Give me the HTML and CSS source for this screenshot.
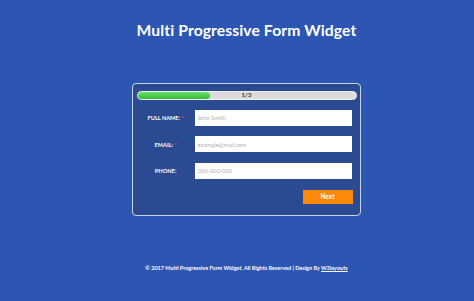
FILE: index.html
```html
<!DOCTYPE html>
<html>
<head>
<meta charset="utf-8">
<link rel="stylesheet" href="styles.css">
</head>
<body>
<div class="page">
  <h1 class="title">Multi Progressive Form Widget</h1>
  <form class="card">
    <div class="progress">
      <div class="progress-fill"></div>
      <span class="progress-text">1/3</span>
    </div>
    <div class="row">
      <label class="label">FULL NAME:<span class="req">*</span></label>
      <input class="field" type="text" placeholder="John Smith">
    </div>
    <div class="row">
      <label class="label">EMAIL:<span class="req">*</span></label>
      <input class="field" type="text" placeholder="example@mail.com">
    </div>
    <div class="row">
      <label class="label">PHONE:</label>
      <input class="field" type="text" placeholder="000-000-000">
    </div>
    <div class="actions">
      <button class="next" type="button">Next</button>
    </div>
  </form>
  <p class="footer">© 2017 Multi Progressive Form Widget. All Rights Reserved | Design By <a class="footer-link" href="#">W3layouts</a></p>
</div>
</body>
</html>
```
FILE: styles.css
```css
* { box-sizing: border-box; }
html, body {
  margin: 0;
  padding: 0;
  background: #2d55b2;
  font-family: Lato, "Open Sans", sans-serif;
}
.page {
  width: 474px;
  height: 301px;
  display: flex;
  flex-direction: column;
  align-items: center;
  padding-top: 19px;
  padding-left: 19px;
}
.title {
  margin: 0;
  color: #ffffff;
  font-size: 15.7px;
  font-weight: 700;
  line-height: 22px;
  letter-spacing: 0.1px;
}
.card {
  margin: 42px 0 0 0;
  width: 229px;
  border: 1.5px solid #c9d5ef;
  border-radius: 4px;
  background: #2a4a92;
  padding: 6.5px 3.5px 11px 3.5px;
  display: flex;
  flex-direction: column;
}
.progress {
  position: relative;
  height: 9px;
  border-radius: 5px;
  background: #dcdcdc;
  border: 1px solid #f0f0f0;
  display: flex;
  align-items: center;
  justify-content: center;
}
.progress-fill {
  position: absolute;
  left: 0;
  top: 0;
  bottom: 0;
  width: 33.3%;
  border-radius: 5px;
  background: linear-gradient(#6ee06a, #33b833);
}
.progress-text {
  position: relative;
  font-size: 6px;
  font-weight: 700;
  color: #333;
  line-height: 1;
}
.row {
  display: grid;
  grid-template-columns: 58px 157px;
  align-items: center;
  margin-top: 10px;
}
.row + .row { margin-top: 10.5px; }
.label {
  text-align: center;
  color: #ffffff;
  font-size: 5.6px;
  font-weight: 700;
}
.req {
  color: #e0443c;
  margin-left: 1px;
}
.field {
  height: 16px;
  border: none;
  background: #ffffff;
  padding: 0 3px;
  font-family: Lato, sans-serif;
  font-size: 5.8px;
  color: #555;
  outline: none;
}
.field::placeholder { color: #b0b0b0; }
.actions {
  display: flex;
  justify-content: flex-end;
  padding-right: 4px;
  margin-top: 11px;
}
.next {
  width: 50px;
  height: 14px;
  border: none;
  background: #fb8a0b;
  color: #ffffff;
  font-family: Lato, sans-serif;
  font-size: 6.5px;
  font-weight: 700;
  padding: 0;
}
.footer {
  margin: 49px 0 0 0;
  color: #ffffff;
  font-size: 5.5px;
  font-weight: 700;
}
.footer-link {
  color: #ffffff;
  text-decoration: underline;
}
```
